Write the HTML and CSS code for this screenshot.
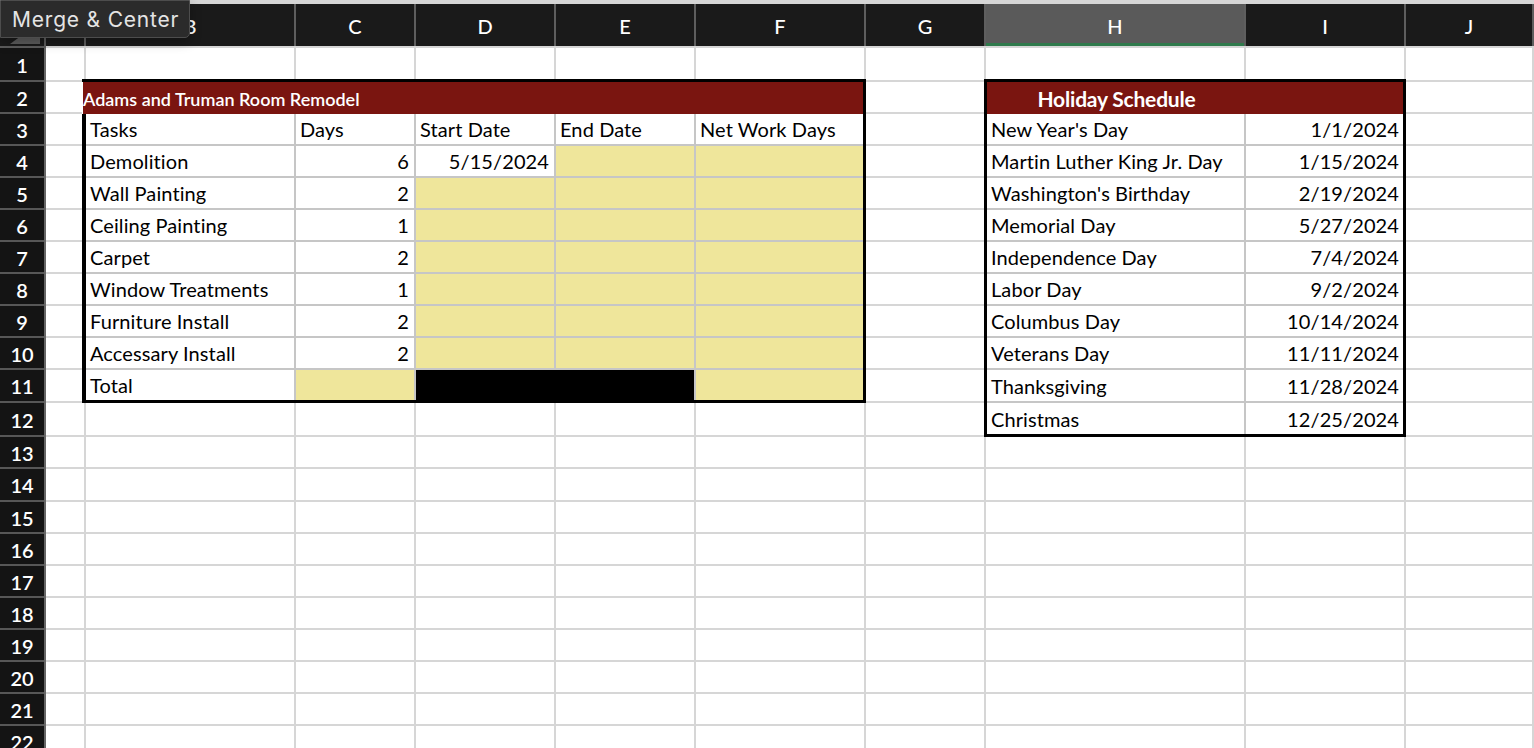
FILE: index.html
```html
<!DOCTYPE html>
<html lang="en">
<head>
<meta charset="utf-8">
<title>Adams and Truman Room Remodel</title>
<link rel="stylesheet" href="styles.css">
</head>
<body>
<div class="sheet">
  <div class="corner">
    <svg class="corner-tri" width="30" height="22" viewBox="0 0 30 22"><polygon points="30,0 30,22 0,22" fill="#5c5c5c"/></svg>
  </div>
  <div class="colheads">
    <div class="ch">A</div>
    <div class="ch">B</div>
    <div class="ch">C</div>
    <div class="ch">D</div>
    <div class="ch">E</div>
    <div class="ch">F</div>
    <div class="ch">G</div>
    <div class="ch ch-sel">H</div>
    <div class="ch">I</div>
    <div class="ch">J</div>
  </div>
  <div class="rowheads">
    <div class="rh">1</div><div class="rh">2</div><div class="rh">3</div><div class="rh">4</div>
    <div class="rh">5</div><div class="rh">6</div><div class="rh">7</div><div class="rh">8</div>
    <div class="rh">9</div><div class="rh">10</div><div class="rh">11</div><div class="rh">12</div>
    <div class="rh">13</div><div class="rh">14</div><div class="rh">15</div><div class="rh">16</div>
    <div class="rh">17</div><div class="rh">18</div><div class="rh">19</div><div class="rh">20</div>
    <div class="rh">21</div><div class="rh">22</div>
  </div>
  <div class="vlines">
    <div></div><div></div><div></div><div></div><div></div>
    <div></div><div></div><div></div><div></div><div></div>
  </div>
  <div class="hlines">
    <div></div><div></div><div></div><div></div><div></div><div></div>
    <div></div><div></div><div></div><div></div><div></div><div></div>
    <div></div><div></div><div></div><div></div><div></div><div></div>
    <div></div><div></div><div></div><div></div>
  </div>

  <div class="tbl proj">
    <div class="proj-title">Adams and Truman Room Remodel</div>
    <div class="proj-body">
      <div class="c">Tasks</div><div class="c">Days</div><div class="c">Start Date</div><div class="c">End Date</div><div class="c">Net Work Days</div>
      <div class="c">Demolition</div><div class="c num">6</div><div class="c num">5/15/2024</div><div class="c y"></div><div class="c y"></div>
      <div class="c">Wall Painting</div><div class="c num">2</div><div class="c y"></div><div class="c y"></div><div class="c y"></div>
      <div class="c">Ceiling Painting</div><div class="c num">1</div><div class="c y"></div><div class="c y"></div><div class="c y"></div>
      <div class="c">Carpet</div><div class="c num">2</div><div class="c y"></div><div class="c y"></div><div class="c y"></div>
      <div class="c">Window Treatments</div><div class="c num">1</div><div class="c y"></div><div class="c y"></div><div class="c y"></div>
      <div class="c">Furniture Install</div><div class="c num">2</div><div class="c y"></div><div class="c y"></div><div class="c y"></div>
      <div class="c">Accessary Install</div><div class="c num">2</div><div class="c y"></div><div class="c y"></div><div class="c y"></div>
      <div class="c">Total</div><div class="c y"></div><div class="c blk"></div><div class="c y last"></div>
    </div>
  </div>

  <div class="tbl hol">
    <div class="hol-title"><span>Holiday Schedule</span></div>
    <div class="hol-body">
      <div class="c">New Year's Day</div><div class="c num">1/1/2024</div>
      <div class="c">Martin Luther King Jr. Day</div><div class="c num">1/15/2024</div>
      <div class="c">Washington's Birthday</div><div class="c num">2/19/2024</div>
      <div class="c">Memorial Day</div><div class="c num">5/27/2024</div>
      <div class="c">Independence Day</div><div class="c num">7/4/2024</div>
      <div class="c">Labor Day</div><div class="c num">9/2/2024</div>
      <div class="c">Columbus Day</div><div class="c num">10/14/2024</div>
      <div class="c">Veterans Day</div><div class="c num">11/11/2024</div>
      <div class="c">Thanksgiving</div><div class="c num">11/28/2024</div>
      <div class="c">Christmas</div><div class="c num">12/25/2024</div>
    </div>
  </div>

  <div class="tooltip">Merge &amp; Center</div>
</div>
</body>
</html>
```

FILE: styles.css
```css
* { box-sizing: border-box; }
html, body {
  margin: 0;
  padding: 0;
  background: #ffffff;
  overflow: hidden;
}
body {
  width: 1534px;
  height: 748px;
  font-family: Lato, "Noto Sans", sans-serif;
  color: #000;
}

.sheet {
  position: relative;
  display: grid;
  grid-template-columns: 46px 40px 210px 120px 140px 140px 170px 120px 260px 160px 128px;
  grid-template-rows: 48px 34px repeat(9, 32px) 33px 34px 32px 33px repeat(8, 32px);
  width: 1534px;
}

/* corner + headers */
.corner {
  grid-column: 1;
  grid-row: 1;
  background: #1a1a1a;
  border-top: 4px solid #d6d6d6;
  border-right: 2px solid #5c5c5c;
  border-bottom: 2px solid #5c5c5c;
  display: flex;
  align-items: flex-end;
  justify-content: flex-end;
  padding: 0 4px 2px 0;
}
.corner-tri { display: block; }

.colheads {
  grid-column: 2 / -1;
  grid-row: 1;
  display: grid;
  grid-template-columns: 40px 210px 120px 140px 140px 170px 120px 260px 160px 128px;
  background: #d6d6d6;
  padding: 4px 0 2px 0;
}
.ch {
  background: #1a1a1a;
  color: #ffffff;
  border-right: 2px solid #5e5e5e;
  display: flex;
  align-items: center;
  justify-content: center;
  font-size: 20px;
  font-weight: 500;
  padding-top: 1px;
}
.ch-sel {
  background: #5a5a5a;
  box-shadow: inset 0 -3px 0 #2f7a4c;
}

.rowheads {
  grid-column: 1;
  grid-row: 2 / -1;
  display: grid;
  grid-template-rows: 34px repeat(9, 32px) 33px 34px 32px 33px repeat(8, 32px);
  background: #141414;
  border-right: 2px solid #666666;
}
.rh {
  color: #ffffff;
  font-size: 20px;
  font-weight: 600;
  display: flex;
  align-items: center;
  justify-content: center;
  border-bottom: 2px solid #575757;
  padding-top: 1px;
}

/* gridline layers */
.vlines {
  grid-column: 2 / -1;
  grid-row: 2 / -1;
  display: grid;
  grid-template-columns: 40px 210px 120px 140px 140px 170px 120px 260px 160px 128px;
}
.vlines div { border-right: 2px solid #d6d6d6; }
.hlines {
  grid-column: 2 / -1;
  grid-row: 2 / -1;
  display: grid;
  grid-template-rows: 34px repeat(9, 32px) 33px 34px 32px 33px repeat(8, 32px);
}
.hlines div { border-bottom: 2px solid #d6d6d6; }

/* tables */
.tbl {
  display: flex;
  flex-direction: column;
  background: #ffffff;
  border: 3px solid #000;
}
.c {
  border-right: 2px solid #c6c6c6;
  border-bottom: 2px solid #c6c6c6;
  font-size: 20px;
  line-height: 1;
  letter-spacing: 0.1px;
  display: flex;
  align-items: center;
  padding: 0 4px 0 4px;
  white-space: nowrap;
  overflow: hidden;
  background: #ffffff;
}
.c.num { justify-content: flex-end; padding-right: 5px; }
.c.y { background: #efe69b; }
.c.blk { background: #000000; grid-column: span 2; }

.proj {
  grid-column: 3 / 8;
  grid-row: 3 / 13;
  margin: -3px 0 0 -4px;
  border-left: 0;
}
.proj-title {
  height: 32px;
  margin-left: 1px;
  background: #7a1510;
  color: #ffffff;
  font-size: 18px;
  font-weight: 600;
  display: flex;
  align-items: center;
  white-space: nowrap;
  overflow: hidden;
  padding-top: 1px;
}
.proj-body {
  display: grid;
  grid-template-columns: 210px 120px 140px 140px 1fr;
  grid-template-rows: repeat(8, 32px) 30px;
  border-left: 4px solid #000;
  flex: 1;
}
.proj-body .c:nth-child(5n) { border-right: 0; }
.proj-body .c:nth-last-child(-n+4) { border-bottom: 0; }
.proj-body .c.last { border-right: 0; }

.hol {
  grid-column: 9 / 11;
  grid-row: 3 / 14;
  margin: -3px 0 0 -2px;
}
.hol-title {
  height: 32px;
  background: #7a1510;
  color: #ffffff;
  display: grid;
  grid-template-columns: 259px 1fr;
  align-items: center;
  font-size: 21px;
  font-weight: 700;
  letter-spacing: -0.2px;
  padding-top: 1px;
}
.hol-title span { text-align: center; }
.hol-body {
  display: grid;
  grid-template-columns: 259px 1fr;
  grid-template-rows: repeat(8, 32px) 33px 31px;
  flex: 1;
}
.hol-body .c:nth-child(2n) { border-right: 0; padding-right: 4px; }
.hol-body .c:nth-last-child(-n+2) { border-bottom: 0; }

/* tooltip overlay */
.tooltip {
  position: absolute;
  left: 0;
  top: 0;
  width: 190px;
  height: 38px;
  background: #2b2b2b;
  border: 1px solid #4d4d4d;
  border-radius: 0 0 5px 0;
  color: #e4e4e4;
  font-family: Inter, "Noto Sans", sans-serif;
  font-size: 21px;
  font-weight: 400;
  letter-spacing: 0.8px;
  display: flex;
  align-items: center;
  padding-left: 11px;
  box-shadow: 0 4px 12px rgba(0, 0, 0, 0.28);
  white-space: nowrap;
}
```
